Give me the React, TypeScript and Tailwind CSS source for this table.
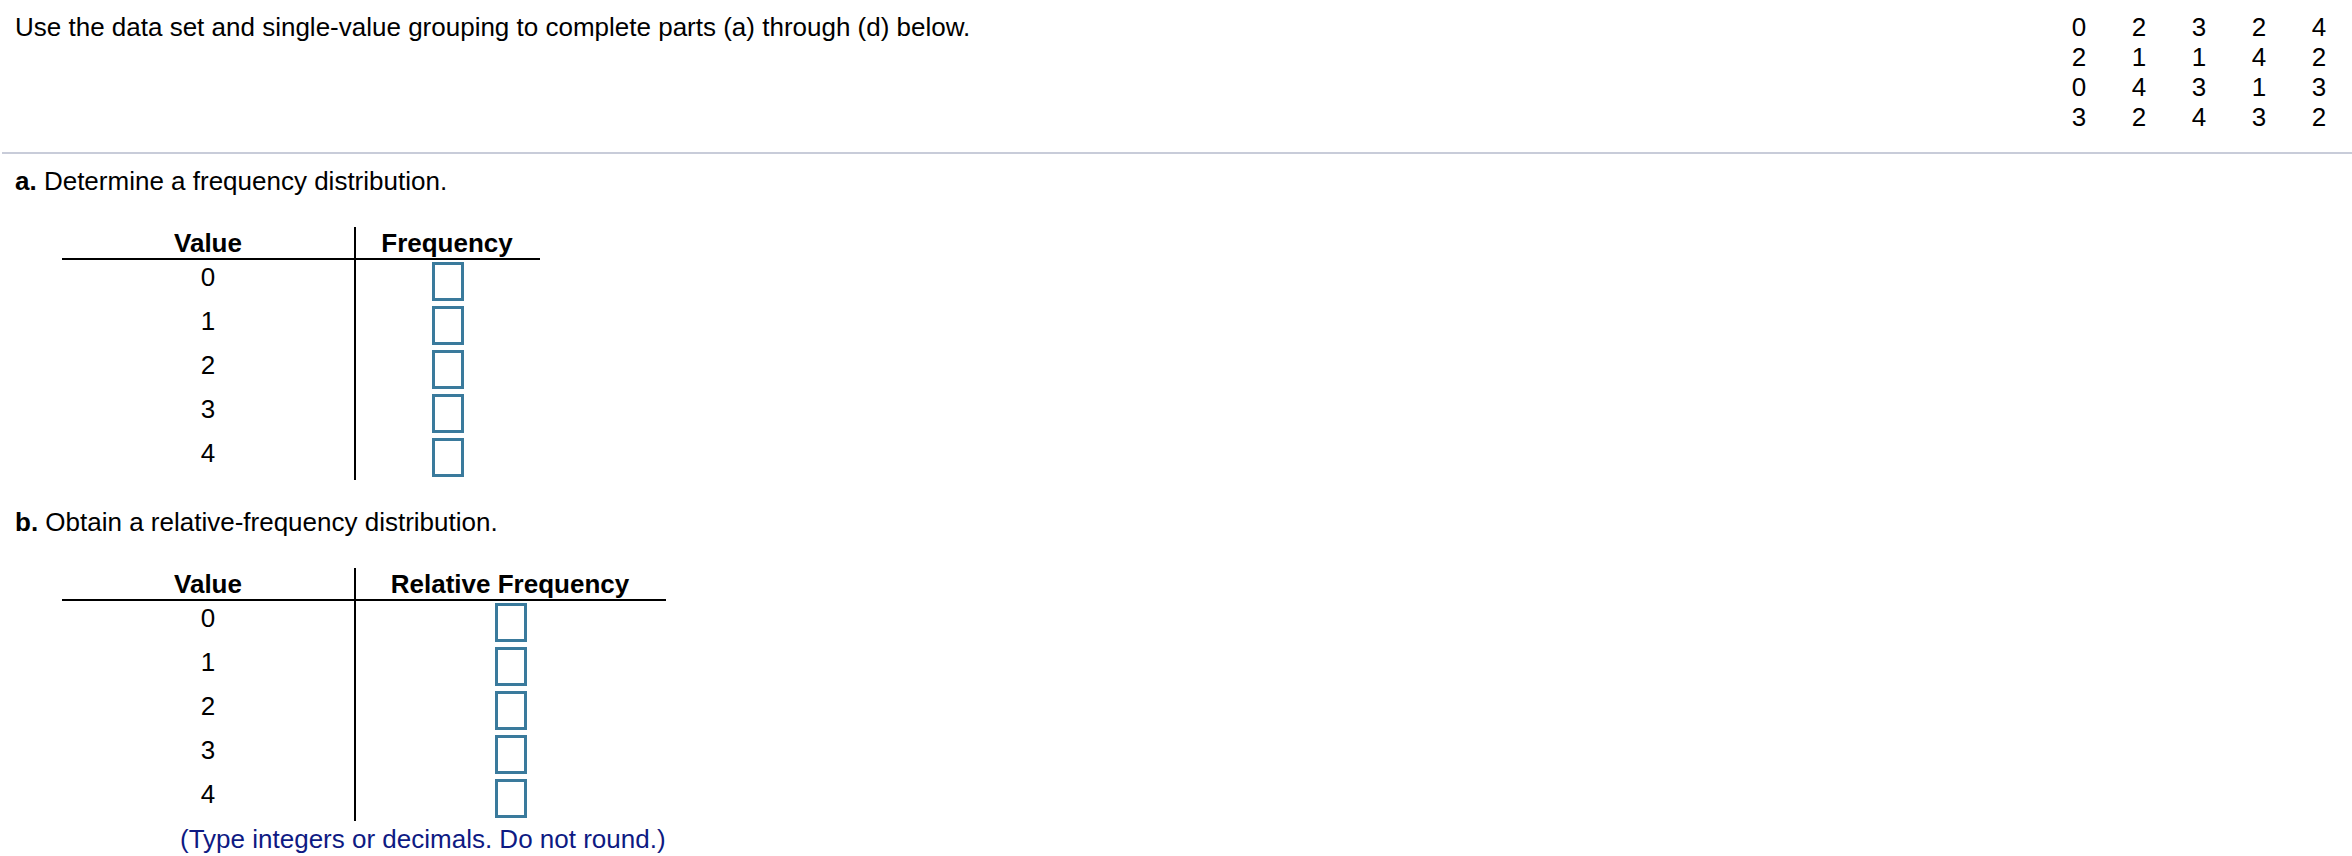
const data = [
  [0, 2, 3, 2, 4],
  [2, 1, 1, 4, 2],
  [0, 4, 3, 1, 3],
  [3, 2, 4, 3, 2],
];

const values = [0, 1, 2, 3, 4];

function AnswerBox() {
  return <div className="mt-[2px] h-[39px] w-[32px] border-[3px] border-[#3a7a9c] bg-white" />;
}

function DistTable({ label, rightWidth }: { label: string; rightWidth: string }) {
  return (
    <div className="ml-[62px] flex">
      <div className="w-[292px]">
        <div className="h-[33px] border-b-2 border-black text-center font-bold leading-[32px]">Value</div>
        {values.map((v) => (
          <div key={v} className="h-[44px] text-center leading-[34px]">
            {v}
          </div>
        ))}
      </div>
      <div className="w-[2px] bg-black" />
      <div className={rightWidth}>
        <div className="-ml-[2px] h-[33px] border-b-2 border-black text-center font-bold leading-[32px]">
          {label}
        </div>
        {values.map((v) => (
          <div key={v} className="flex h-[44px] justify-center">
            <AnswerBox />
          </div>
        ))}
      </div>
    </div>
  );
}

export default function App() {
  return (
    <div className="h-[856px] w-[2352px] bg-white font-['Liberation_Sans',Arial,sans-serif] text-[26px] leading-[30px] text-black">
      <div className="flex justify-between pl-[15px] pr-[3px] pt-[12px]">
        <p>Use the data set and single-value grouping to complete parts (a) through (d) below.</p>
        <div className="grid w-[300px] grid-cols-5">
          {data.flat().map((n, i) => (
            <div key={i} className="h-[30px] text-center">
              {n}
            </div>
          ))}
        </div>
      </div>

      <div className="ml-[2px] mt-[20px] h-[2px] bg-[#c8ccd9]" />

      <p className="mt-[12px] pl-[15px]">
        <span className="font-bold">a.</span> Determine a frequency distribution.
      </p>
      <div className="mt-[31px]">
        <DistTable label="Frequency" rightWidth="w-[184px]" />
      </div>

      <p className="mt-[27px] pl-[15px]">
        <span className="font-bold">b.</span> Obtain a relative-frequency distribution.
      </p>
      <div className="mt-[31px]">
        <DistTable label="Relative Frequency" rightWidth="w-[310px]" />
      </div>
      <p className="ml-[180px] mt-[3px] text-[#0e1a83]">(Type integers or decimals. Do not round.)</p>
    </div>
  );
}
